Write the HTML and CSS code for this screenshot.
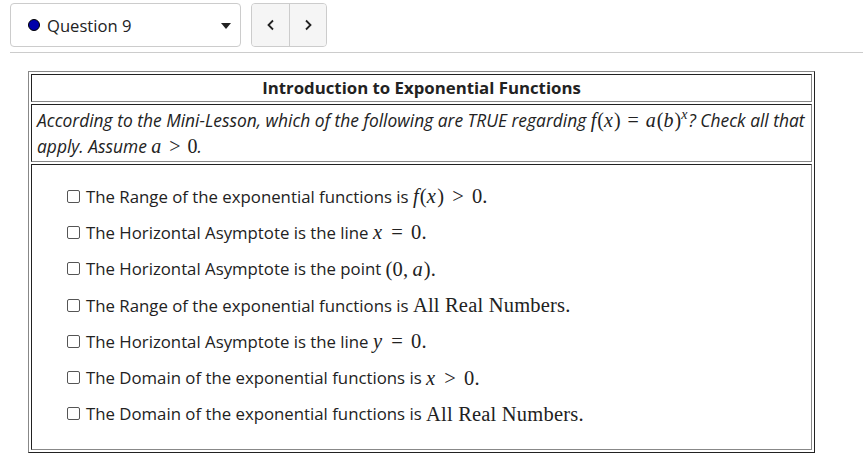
FILE: index.html
```html
<!DOCTYPE html>
<html>
<head>
<meta charset="utf-8">
<link rel="stylesheet" href="styles.css">
</head>
<body>
<div class="topbar">
  <div class="select">
    <span class="dot"></span>
    <span class="qlabel">Question 9</span>
    <span class="caret"></span>
  </div>
  <div class="nav">
    <button class="navbtn">
      <svg width="10" height="12" viewBox="0 0 10 12"><path d="M7 1.5 L2.5 6 L7 10.5" fill="none" stroke="#222" stroke-width="1.8"/></svg>
    </button>
    <button class="navbtn">
      <svg width="10" height="12" viewBox="0 0 10 12"><path d="M3 1.5 L7.5 6 L3 10.5" fill="none" stroke="#222" stroke-width="1.8"/></svg>
    </button>
  </div>
</div>
<div class="rule"></div>
<table class="qtable">
  <tr><td class="title">Introduction to Exponential Functions</td></tr>
  <tr><td class="question">According to the Mini-Lesson, which of the following are TRUE regarding <span class="m"><i>f</i>(<i>x</i>)<span class="r">=</span><i>a</i>(<i>b</i>)<sup><i>x</i></sup></span>? Check all that apply. Assume <span class="m"><i>a</i><span class="r">&gt;</span>0</span>.</td></tr>
  <tr><td class="answers">
    <label class="opt"><span class="box"></span>The Range of the exponential functions is&nbsp;<span class="m"><i>f</i>(<i>x</i>)<span class="r">&gt;</span>0.</span></label>
    <label class="opt"><span class="box"></span>The Horizontal Asymptote is the line&nbsp;<span class="m"><i>x</i><span class="r">=</span>0.</span></label>
    <label class="opt"><span class="box"></span>The Horizontal Asymptote is the point&nbsp;<span class="m">(0,<span class="c"></span><i>a</i>).</span></label>
    <label class="opt"><span class="box"></span>The Range of the exponential functions is&nbsp;<span class="m">All Real Numbers.</span></label>
    <label class="opt"><span class="box"></span>The Horizontal Asymptote is the line&nbsp;<span class="m"><i>y</i><span class="r">=</span>0.</span></label>
    <label class="opt"><span class="box"></span>The Domain of the exponential functions is&nbsp;<span class="m"><i>x</i><span class="r">&gt;</span>0.</span></label>
    <label class="opt"><span class="box"></span>The Domain of the exponential functions is&nbsp;<span class="m">All Real Numbers.</span></label>
  </td></tr>
</table>
</body>
</html>
```
FILE: styles.css
```css
html, body {
  margin: 0;
  padding: 0;
  background: #fff;
  font-family: "Open Sans", "Liberation Sans", sans-serif;
  color: #222;
}
.topbar {
  display: flex;
  align-items: flex-start;
  padding: 3px 0 0 10px;
  gap: 10px;
}
.select {
  box-sizing: border-box;
  width: 231px;
  height: 44px;
  border: 1px solid #ccc;
  border-radius: 4px;
  display: flex;
  align-items: center;
  padding-left: 17px;
  padding-right: 9px;
}
.dot {
  width: 12px;
  height: 12px;
  box-sizing: border-box;
  border-radius: 50%;
  background: #0000aa;
  border: 1px solid #000;
  margin-right: 7px;
}
.qlabel {
  font-size: 16.6px;
  color: #222;
  flex: 1;
}
.caret {
  width: 0;
  height: 0;
  border-left: 5px solid transparent;
  border-right: 5px solid transparent;
  border-top: 6px solid #222;
  margin-top: 2px;
}
.nav {
  display: flex;
  height: 44px;
  box-sizing: border-box;
  border: 1px solid #ccc;
  border-radius: 4px;
  background: #f5f5f5;
  overflow: hidden;
}
.navbtn {
  width: 37px;
  height: 42px;
  border: none;
  background: #f5f5f5;
  padding: 0;
  display: flex;
  align-items: center;
  justify-content: center;
}
.navbtn + .navbtn {
  border-left: 1px solid #ccc;
}
.rule {
  margin: 5px 0 0 10px;
  border-top: 1px solid #ccc;
}
.qtable {
  margin: 18px 0 0 28px;
  width: 787px;
  border-collapse: separate;
  border-spacing: 2px;
  border-style: solid;
  border-width: 1px;
  border-color: #888 #222 #222 #888;
}
.qtable td {
  border-style: solid;
  border-width: 1px;
  border-color: #222 #888 #888 #222;
  padding: 0;
}
.title {
  text-align: center;
  font-weight: bold;
  font-size: 16.8px;
  height: 26px;
  line-height: 26px;
}
.question {
  font-style: italic;
  font-size: 17.4px;
  line-height: 26px;
  padding: 2px 1px 2px 5px !important;
}
.m {
  font-family: "Liberation Serif", "DejaVu Serif", serif;
  font-style: normal;
  font-size: 20px;
  line-height: 20px;
}
.m i {
  font-style: italic;
  padding-right: 1px;
}
.r {
  margin: 0 7px;
}
.opt .r {
  margin: 0 8px;
}
.c {
  display: inline-block;
  width: 4px;
}
.m sup {
  font-size: 14px;
  vertical-align: 8px;
  line-height: 0;
}
.answers {
  padding: 13px 0 17px 35px !important;
  display: flex;
  flex-direction: column;
}
.opt {
  display: flex;
  align-items: center;
  height: 36.3px;
  font-size: 16.8px;
  white-space: pre;
}
.opt .m {
  font-size: 20.5px;
  letter-spacing: 0.2px;
}
.box {
  box-sizing: border-box;
  width: 13px;
  height: 13px;
  border: 1px solid #555;
  border-radius: 2px;
  margin-right: 6px;
  flex: none;
}
```
